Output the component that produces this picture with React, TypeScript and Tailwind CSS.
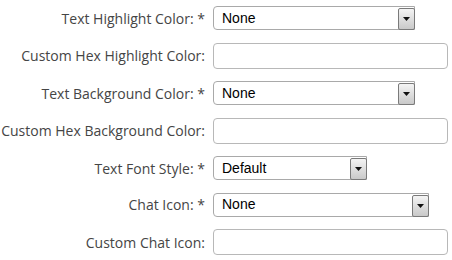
import React from 'react';

type Field = {
  label: string;
  required?: boolean;
  kind: 'select' | 'input';
  value?: string;
  width?: string;
};

const fields: Field[] = [
  { label: 'Text Highlight Color:', required: true, kind: 'select', value: 'None', width: 'w-[202px]' },
  { label: 'Custom Hex Highlight Color:', kind: 'input' },
  { label: 'Text Background Color:', required: true, kind: 'select', value: 'None', width: 'w-[202px]' },
  { label: 'Custom Hex Background Color:', kind: 'input' },
  { label: 'Text Font Style:', required: true, kind: 'select', value: 'Default', width: 'w-[154px]' },
  { label: 'Chat Icon:', required: true, kind: 'select', value: 'None', width: 'w-[216px]' },
  { label: 'Custom Chat Icon:', kind: 'input' },
];

const FakeSelect = ({ value, width }: { value?: string; width?: string }) => (
  <div
    className={`${width} h-[24px] flex items-center border border-[#a9a9a9] rounded-l-[4px] bg-white relative`}
  >
    <span className="pl-[8px] text-[14px] text-black font-['Liberation_Sans',Arial,sans-serif]">
      {value}
    </span>
    {/* arrow button */}
    <div className="absolute right-[-1px] top-[1px] h-[22px] w-[17px] border border-[#7a7a7a] rounded-[2px] bg-gradient-to-b from-[#f4f4f4] to-[#c9c9c9] flex items-center justify-center">
      <svg width="7" height="4" viewBox="0 0 7 4">
        <path d="M0 0 H7 L3.5 4 Z" fill="#111" />
      </svg>
    </div>
  </div>
);

const FakeInput = () => (
  <div className="w-[235px] h-[26px] border border-[#b8b8b8] rounded-[4px] bg-white" />
);

export default function App() {
  return (
    <div className="w-[452px] h-[260px] bg-white overflow-hidden pt-[6px] flex flex-col gap-[12.5px]">
      {fields.map((f) => (
        <div key={f.label} className="flex items-center">
          <div className="w-[206px] pr-[1px] text-right text-[14px] text-[#454545] font-['Open_Sans',sans-serif] whitespace-nowrap">
            {f.label}
            {f.required && ' *'}
          </div>
          <div className="ml-[7px]">
            {f.kind === 'select' ? <FakeSelect value={f.value} width={f.width} /> : <FakeInput />}
          </div>
        </div>
      ))}
    </div>
  );
}
